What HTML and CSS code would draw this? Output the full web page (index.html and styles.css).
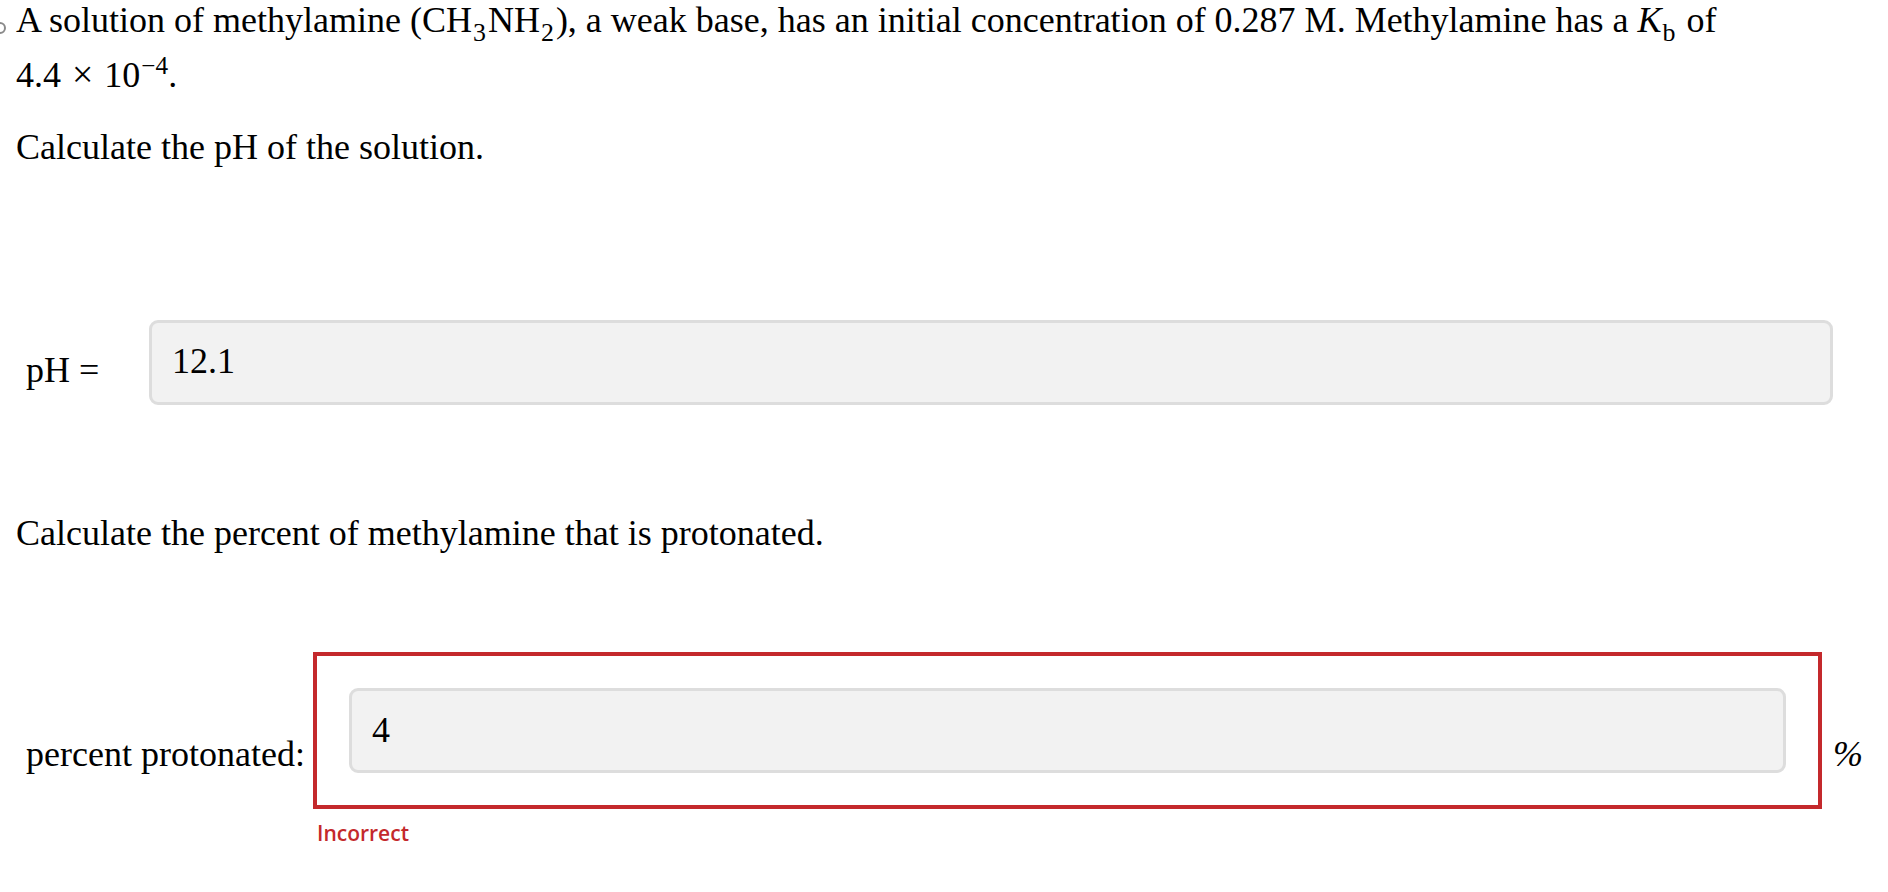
FILE: index.html
```html
<!DOCTYPE html>
<html lang="en">
<head>
<meta charset="utf-8">
<title>Methylamine question</title>
<link rel="stylesheet" href="styles.css">
</head>
<body>
<div class="page">
  <span class="bullet"></span>
  <p class="q q-first">A solution of methylamine (CH<sub>3</sub>NH<sub>2</sub>), a weak base, has an initial concentration of 0.287&nbsp;M. Methylamine has a <i class="var">K</i><sub>b</sub> of <span class="math">4.4 <span class="op">×</span> 10<sup>−4</sup>.</span></p>
  <p class="q q-ph">Calculate the pH of the solution.</p>
  <div class="row row-ph">
    <span class="label label-ph">pH =</span>
    <div class="input input-ph">12.1</div>
  </div>
  <p class="q q-pct">Calculate the percent of methylamine that is protonated.</p>
  <div class="row row-pct">
    <span class="label label-pct">percent protonated:</span>
    <div class="feedback">
      <div class="redbox"><div class="input input-pct">4</div></div>
      <div class="incorrect">Incorrect</div>
    </div>
    <span class="unit">%</span>
  </div>
</div>
</body>
</html>
```
FILE: styles.css
```css
html, body {
  margin: 0;
  padding: 0;
  background: #ffffff;
}
body {
  font-family: "Liberation Serif", "Times New Roman", serif;
  font-size: 36px;
  color: #000000;
  overflow: hidden;
}
.page {
  position: relative;
  padding: 0 18px 0 16px;
  margin-top: -7px;
}
.bullet {
  position: absolute;
  left: -6px;
  top: 29px;
  width: 8px;
  height: 8px;
  border: 2px solid #8a8a8a;
  border-radius: 50%;
}
.q {
  margin: 0;
  line-height: 51px;
}
.q-first {
  max-width: 1790px;
  line-height: 54px;
}
.q sub {
  font-size: 0.72em;
  line-height: 0;
  vertical-align: -0.34em;
  margin: 0 2px 0 1px;
}
.q sup {
  font-size: 0.7em;
  line-height: 0;
  vertical-align: 0.5em;
  margin-left: 1px;
}
.var {
  font-style: italic;
}
.math {
  white-space: nowrap;
}
.op {
  margin: 0 2px;
  font-size: 1.05em;
}
.q-ph {
  margin-top: 20px;
}
.row {
  display: flex;
  align-items: flex-start;
  padding-left: 10px;
}
.row-ph {
  margin-top: 147px;
}
.label {
  flex: none;
  line-height: 51px;
  white-space: nowrap;
}
.label-ph {
  width: 123px;
  margin-top: 25px;
}
.label-pct {
  width: 287px;
  margin-top: 77px;
}
.input {
  box-sizing: border-box;
  height: 85px;
  padding: 13px 20px 0;
  line-height: 51px;
  background: #f2f2f2;
  border: 3px solid #dddddd;
  border-radius: 9px;
}
.input-ph {
  flex: 1;
  margin-right: 37px;
}
.input-pct {
  padding-top: 14px;
}
.q-pct {
  margin-top: 103px;
}
.row-pct {
  margin-top: 93px;
}
.feedback {
  flex: 1;
  display: flex;
  flex-direction: column;
}
.redbox {
  border: 4px solid #c4292c;
  padding: 32px;
}
.incorrect {
  margin-top: 10px;
  padding-left: 4px;
  font-family: "Open Sans", "Liberation Sans", sans-serif;
  font-weight: 600;
  font-size: 21px;
  line-height: 29px;
  color: #c4292c;
}
.unit {
  flex: none;
  box-sizing: border-box;
  width: 48px;
  padding-left: 11px;
  margin-top: 77px;
  line-height: 51px;
  font-style: italic;
}
```
